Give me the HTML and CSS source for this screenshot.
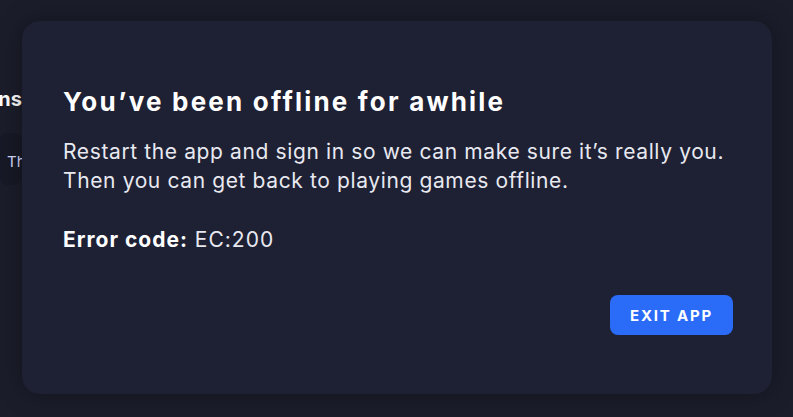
FILE: index.html
```html
<!DOCTYPE html>
<html lang="en">
<head>
    <meta charset="UTF-8">
    <meta name="viewport" content="width=device-width, initial-scale=1.0">
    <title>Offline</title>
    <link rel="stylesheet" href="styles.css">
</head>
<body>

    <!-- Page behind the dialog -->
    <div class="backdrop">
        <div class="side">
            <h3>Subscriptions</h3>
            <div class="tile">The</div>
        </div>
    </div>

    <!-- Offline dialog -->
    <div class="dialog">
        <h2>You’ve been offline for awhile</h2>
        <p class="message">Restart the app and sign in so we can make sure it’s really you.<br>Then you can get back to playing games offline.</p>
        <p class="code"><strong>Error code:</strong> EC:200</p>
        <div class="actions">
            <button type="button">EXIT APP</button>
        </div>
    </div>

</body>
</html>
```

FILE: styles.css
```css
/* General styling */
* {
    margin: 0;
    padding: 0;
    box-sizing: border-box;
    font-family: "Inter", "Noto Sans", sans-serif;
}

body {
    background-color: #1b1d2b;
    width: 793px;
    height: 417px;
    overflow: hidden;
    position: relative;
}

/* Page behind */
.backdrop {
    padding-top: 87px;
}

.side {
    margin-left: -278px;
    width: 300px;
}

.side h3 {
    color: #fff;
    font-size: 20px;
    font-weight: 700;
    text-align: right;
}

.tile {
    margin-top: 22px;
    margin-left: 278px;
    height: 52px;
    border-radius: 8px;
    background-color: #171926;
    color: #d5ddff;
    font-size: 15px;
    padding: 19px 7px;
}

/* Dialog */
.dialog {
    position: absolute;
    left: 22px;
    top: 21px;
    width: 750px;
    height: 373px;
    background-color: #1e2033;
    border-radius: 18px;
    box-shadow: 0 0 24px rgba(0, 0, 0, 0.35);
    padding: 63px 39px 0 41px;
    display: flex;
    flex-direction: column;
    color: #fff;
}

.dialog h2 {
    font-size: 26px;
    font-weight: 700;
    line-height: 36px;
    letter-spacing: 2.2px;
}

.message {
    margin-top: 17px;
    font-size: 21px;
    line-height: 29px;
    letter-spacing: 0.62px;
    color: #e8e9f0;
}

.code {
    margin-top: 30px;
    font-size: 21px;
    line-height: 29px;
    letter-spacing: 1px;
    color: #e8e9f0;
}

.code strong {
    font-weight: 700;
    color: #fff;
}

.actions {
    display: flex;
    justify-content: flex-end;
    margin-top: 41px;
}

.actions button {
    background-color: #2a6bf7;
    color: #fff;
    border: none;
    border-radius: 8px;
    width: 123px;
    height: 40px;
    font-size: 15px;
    font-weight: 700;
    letter-spacing: 1.8px;
    cursor: pointer;
}
```
